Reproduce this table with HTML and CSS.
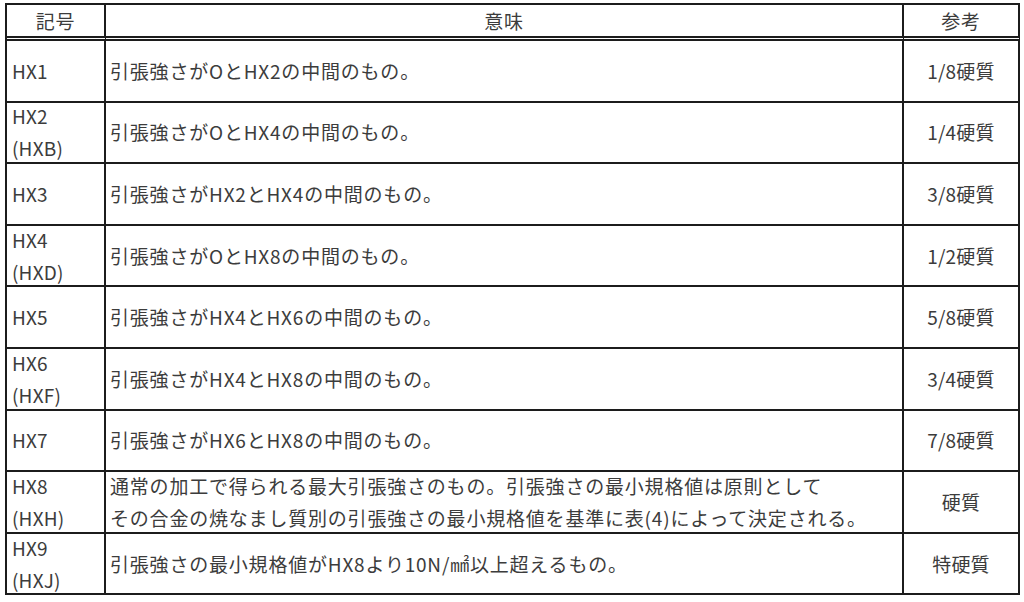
FILE: index.html
```html
<!DOCTYPE html>
<html lang="ja">
<head>
<meta charset="utf-8">
<title>質別記号</title>
<link rel="stylesheet" href="styles.css">
</head>
<body>
<table class="temper">
  <thead>
    <tr>
      <th class="c1">記号</th>
      <th class="c2">意味</th>
      <th class="c3">参考</th>
    </tr>
  </thead>
  <tbody>
    <tr><td class="code">HX1</td><td class="desc">引張強さがOとHX2の中間のもの。</td><td class="ref">1/8硬質</td></tr>
    <tr><td class="code"><div class="stack">HX2<br>(HXB)</div></td><td class="desc">引張強さがOとHX4の中間のもの。</td><td class="ref">1/4硬質</td></tr>
    <tr><td class="code">HX3</td><td class="desc">引張強さがHX2とHX4の中間のもの。</td><td class="ref">3/8硬質</td></tr>
    <tr><td class="code"><div class="stack">HX4<br>(HXD)</div></td><td class="desc">引張強さがOとHX8の中間のもの。</td><td class="ref">1/2硬質</td></tr>
    <tr><td class="code">HX5</td><td class="desc">引張強さがHX4とHX6の中間のもの。</td><td class="ref">5/8硬質</td></tr>
    <tr><td class="code"><div class="stack">HX6<br>(HXF)</div></td><td class="desc">引張強さがHX4とHX8の中間のもの。</td><td class="ref">3/4硬質</td></tr>
    <tr><td class="code">HX7</td><td class="desc">引張強さがHX6とHX8の中間のもの。</td><td class="ref">7/8硬質</td></tr>
    <tr><td class="code"><div class="stack">HX8<br>(HXH)</div></td><td class="desc"><div class="stack">通常の加工で得られる最大引張強さのもの。引張強さの最小規格値は原則として<br>その合金の焼なまし質別の引張強さの最小規格値を基準に表(4)によって決定される。</div></td><td class="ref">硬質</td></tr>
    <tr><td class="code"><div class="stack">HX9<br>(HXJ)</div></td><td class="desc">引張強さの最小規格値がHX8より10N/㎟以上超えるもの。</td><td class="ref">特硬質</td></tr>
  </tbody>
</table>
</body>
</html>
```

FILE: styles.css
```css
html, body {
  margin: 0;
  padding: 0;
  background: #ffffff;
}

body {
  padding: 3px 0 0 5px;
  font-family: "Noto Sans CJK JP", "Noto Sans", sans-serif;
  color: #3c3c3c;
}

.temper {
  border-collapse: separate;
  border-spacing: 0;
  table-layout: fixed;
  border-top: 2px solid #1c1c1c;
  border-left: 2px solid #1c1c1c;
}

.temper th,
.temper td {
  box-sizing: border-box;
  border-right: 2px solid #1c1c1c;
  border-bottom: 2px solid #1c1c1c;
  padding: 0;
  font-size: 19px;
  font-weight: 400;
  line-height: 30px;
  letter-spacing: 0.8px;
  white-space: nowrap;
}

.temper th {
  height: 36px;
  line-height: 31px;
  text-align: center;
  border-bottom: 5px double #1c1c1c;
}

.temper .c1 { width: 99px; }
.temper .c2 { width: 798px; }
.temper .c3 { width: 116px; }

.temper td {
  height: 61.6px;
  vertical-align: middle;
}

.temper .stack {
  line-height: 32px;
  margin: -2.3px 0;
}

.temper .code {
  padding-left: 5px;
  letter-spacing: 0.2px;
}

.temper .desc {
  padding-left: 4px;
}

.temper .ref {
  text-align: center;
  letter-spacing: 0.2px;
}
```
